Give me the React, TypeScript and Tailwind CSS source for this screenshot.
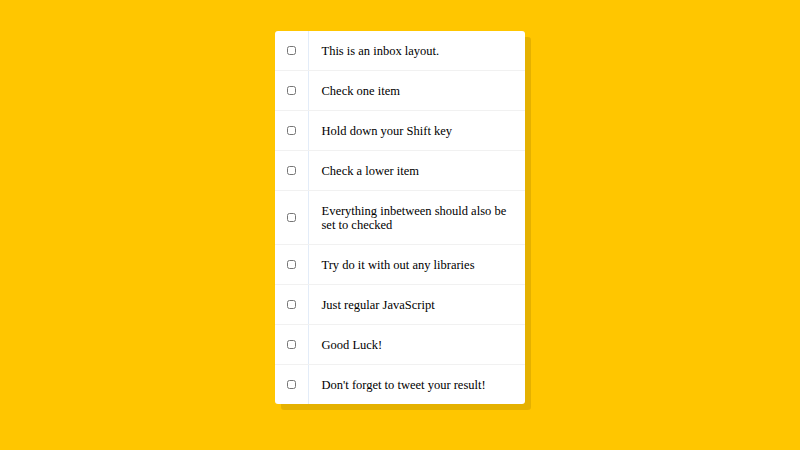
import { useState } from 'react'

const items = [
  'This is an inbox layout.',
  'Check one item',
  'Hold down your Shift key',
  'Check a lower item',
  'Everything inbetween should also be set to checked',
  'Try do it with out any libraries',
  'Just regular JavaScript',
  'Good Luck!',
  "Don't forget to tweet your result!",
]

export default function App() {
  const [checked, setChecked] = useState<boolean[]>(items.map(() => false))
  const [last, setLast] = useState<number | null>(null)

  const toggle = (i: number, shift: boolean) => {
    const next = [...checked]
    next[i] = !next[i]
    if (shift && last !== null && next[i]) {
      const [a, b] = last < i ? [last, i] : [i, last]
      for (let k = a; k <= b; k++) next[k] = true
    }
    setChecked(next)
    setLast(i)
  }

  return (
    <div className="min-h-screen w-full bg-[#ffc600] pt-[31px]">
      <div className="mx-auto w-[250px] rounded-[3px] bg-white shadow-[6px_6px_0_rgba(0,0,0,0.1)]">
        {items.map((text, i) => (
          <div key={i} className="flex items-center border-b border-[#f1f1f1] last:border-b-0">
            <input
              type="checkbox"
              checked={checked[i]}
              onChange={() => {}}
              onClick={(e) => toggle(i, e.shiftKey)}
              className="m-[12px] h-[9px] w-[9px] shrink-0"
            />
            <p
              className={
                'flex-1 border-l border-[#e3ecf8] px-[12.5px] py-[12.5px] text-[12.5px] leading-[14px] text-black [font-family:"Liberation_Serif",serif] ' +
                (checked[i] ? 'bg-[#f9f9f9] line-through' : '')
              }
            >
              {text}
            </p>
          </div>
        ))}
      </div>
    </div>
  )
}
